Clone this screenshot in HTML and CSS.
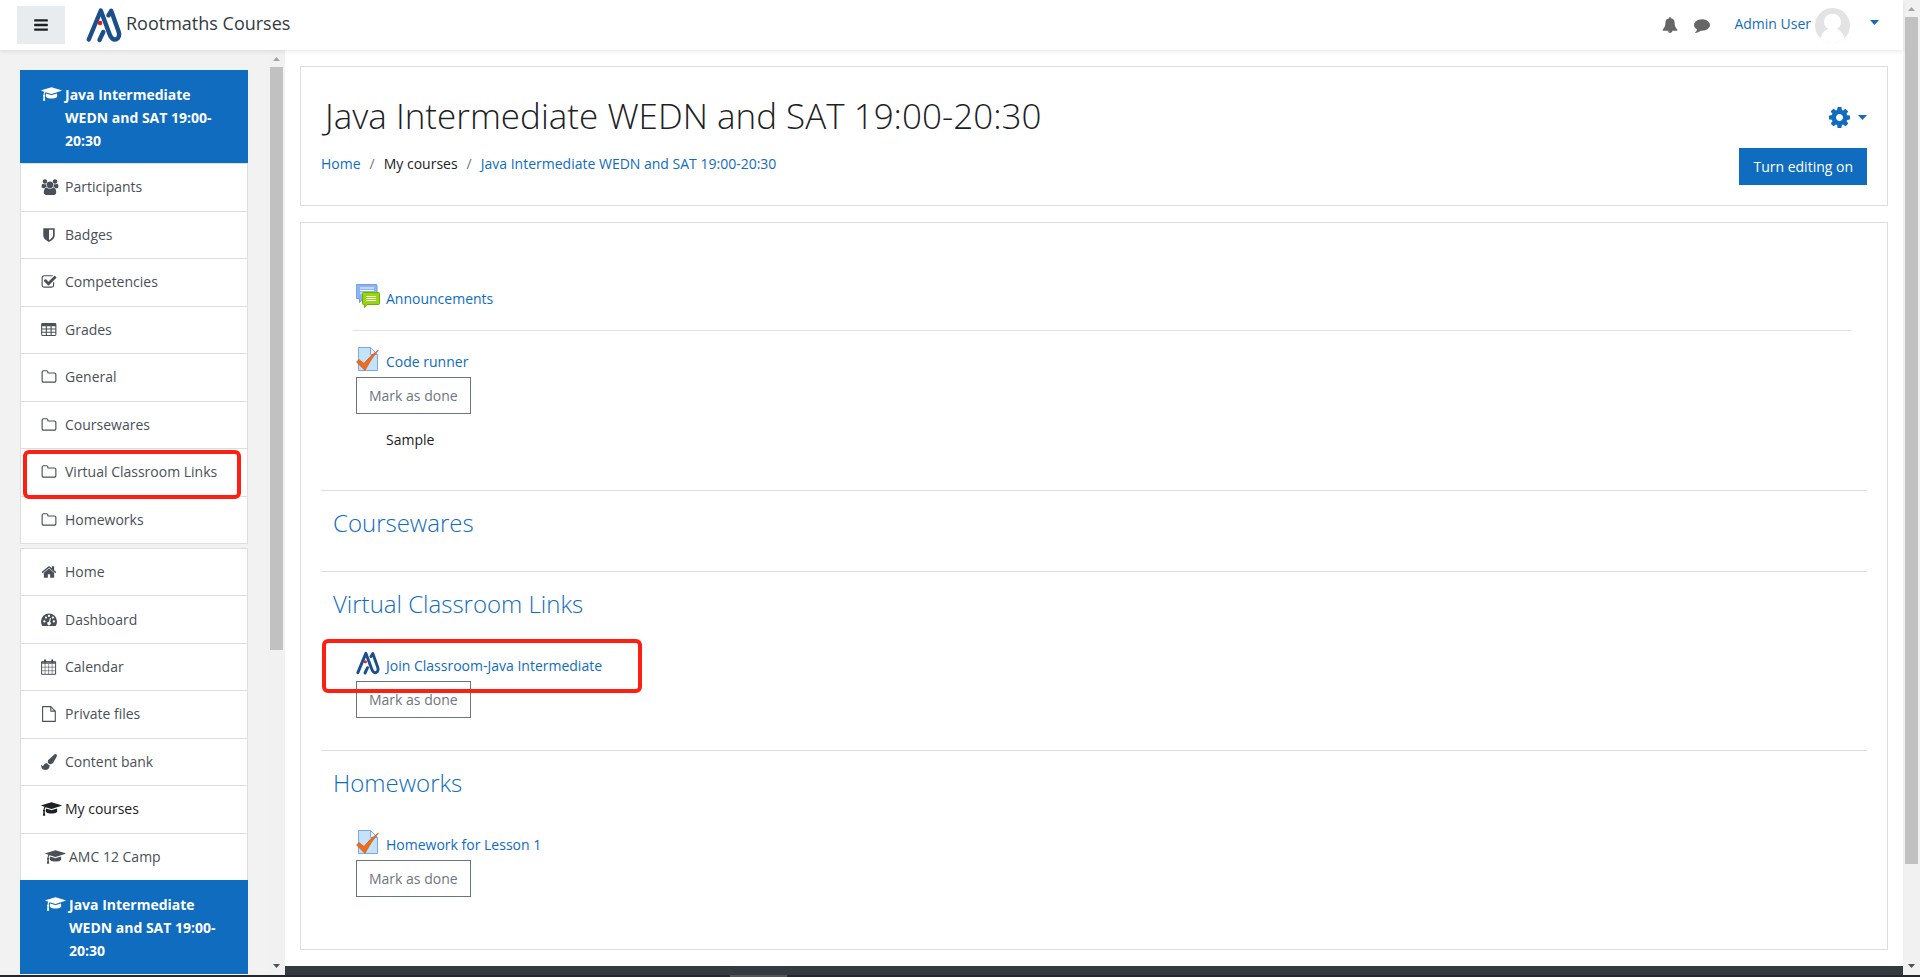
FILE: index.html
```html
<!DOCTYPE html>
<html lang="en">
<head>
    <meta charset="UTF-8">
    <meta name="viewport" content="width=device-width, initial-scale=1.0">
    <title>Course: Java Intermediate WEDN and SAT 19:00-20:30</title>
    <link rel="stylesheet" href="styles.css">
</head>
<body>
    <svg class="sprite" xmlns="http://www.w3.org/2000/svg">
        <symbol id="i-bars" viewBox="0 0 1792 1792"><path d="M1664 1344v128q0 26-19 45t-45 19h-1408q-26 0-45-19t-19-45v-128q0-26 19-45t45-19h1408q26 0 45 19t19 45zm0-512v128q0 26-19 45t-45 19h-1408q-26 0-45-19t-19-45v-128q0-26 19-45t45-19h1408q26 0 45 19t19 45zm0-512v128q0 26-19 45t-45 19h-1408q-26 0-45-19t-19-45v-128q0-26 19-45t45-19h1408q26 0 45 19t19 45z"/></symbol>
        <symbol id="i-cap" viewBox="0 0 2304 1792"><path d="M1774 836l18 316q4 69-82 128t-235 93.500-323 34.500-323-34.500-235-93.500-82-128l18-316 574 181q22 7 48 7t48-7zm530-324q0 23-22 31l-1120 352q-4 1-10 1t-10-1l-652-206q-43 34-71 111.500t-34 178.500q63 36 63 109 0 69-58 107l58 433q2 14-8 25-9 11-24 11h-192q-15 0-24-11-10-11-8-25l58-433q-58-38-58-107 0-73 65-111 11-207 98-330l-333-104q-22-8-22-31t22-31l1120-352q4-1 10-1t10 1l1120 352q22 8 22 31z"/></symbol>
        <symbol id="i-users" viewBox="0 0 2048 1792"><path d="M657 896q-162 5-265 128h-134q-82 0-138-40.500t-56-118.500q0-353 124-353 6 0 43.500 21t97.500 42.500 119 21.500q67 0 133-23-5 37-5 66 0 139 81 256zm1071 637q0 120-73 189.500t-194 69.500h-874q-121 0-194-69.500t-73-189.500q0-53 3.500-103.500t14-109 26.500-108.500 43-97.500 62-81 85.500-53.500 111.500-20q10 0 43 21.500t73 48 107 48 135 21.500 135-21.500 107-48 73-48 43-21.500q61 0 111.500 20t85.500 53.500 62 81 43 97.500 26.500 108.500 14 109 3.500 103.500zm-1024-1277q0 106-75 181t-181 75-181-75-75-181 75-181 181-75 181 75 75 181zm704 384q0 159-112.500 271.500t-271.500 112.500-271.500-112.500-112.500-271.500 112.500-271.500 271.500-112.500 271.500 112.500 112.500 271.500zm576 225q0 78-56 118.500t-138 40.500h-134q-103-123-265-128 81-117 81-256 0-29-5-66 66 23 133 23 59 0 119-21.500t97.500-42.500 43.500-21q124 0 124 353zm-128-609q0 106-75 181t-181 75-181-75-75-181 75-181 181-75 181 75 75 181z"/></symbol>
        <symbol id="i-shield" viewBox="0 0 1792 1792"><path d="M1344 960v-640h-448v1137q119-63 213-137 235-184 235-360zm192-768v768q0 86-33.500 170.500t-83 150-118 127.500-126.500 103-121 77.500-89.500 49.500-42.500 20q-12 6-26 6t-26-6q-16-7-42.500-20t-89.500-49.500-121-77.500-126.500-103-118-127.500-83-150-33.500-170.500v-768q0-26 19-45t45-19h1152q26 0 45 19t19 45z"/></symbol>
        <symbol id="i-check" viewBox="0 0 1792 1792"><path d="M1472 930v318q0 119-84.500 203.500t-203.500 84.500h-832q-119 0-203.500-84.500t-84.500-203.500v-832q0-119 84.500-203.500t203.500-84.500h832q63 0 117 25 15 7 18 23 3 17-9 29l-49 49q-10 10-23 10-3 0-9-2-23-6-45-6h-832q-66 0-113 47t-47 113v832q0 66 47 113t113 47h832q66 0 113-47t47-113v-254q0-13 9-22l64-64q10-10 23-10 6 0 12 3 20 8 20 29zm231-489l-814 814q-24 24-57 24t-57-24l-430-430q-24-24-24-57t24-57l110-110q24-24 57-24t57 24l263 263 647-647q24-24 57-24t57 24l110 110q24 24 24 57t-24 57z"/></symbol>
        <symbol id="i-table" viewBox="0 0 16 16"><path fill-rule="evenodd" d="M1.500 1h12.500a1.400 1.400 0 0 1 1.400 1.400v10.200a1.400 1.400 0 0 1-1.400 1.400h-12.500a1.400 1.400 0 0 1-1.400-1.400v-10.200a1.400 1.400 0 0 1 1.400-1.400zM1.200 4.200v2.300h3.600v-2.300zM5.900 4.200v2.300h3.700v-2.300zM10.700 4.200v2.300h3.600v-2.300zM1.200 7.500v2.300h3.600v-2.300zM5.900 7.500v2.300h3.700v-2.300zM10.700 7.500v2.300h3.600v-2.300zM1.200 10.800v2.100h3.600v-2.100zM5.900 10.800v2.100h3.700v-2.100zM10.700 10.800v2.100h3.600v-2.100z"/></symbol>
        <symbol id="i-folder" viewBox="0 0 1792 1792"><path d="M1600 1312v-704q0-40-28-68t-68-28h-704q-40 0-68-28t-28-68v-64q0-40-28-68t-68-28h-320q-40 0-68 28t-28 68v960q0 40 28 68t68 28h1216q40 0 68-28t28-68zm128-704v704q0 92-66 158t-158 66h-1216q-92 0-158-66t-66-158v-960q0-92 66-158t158-66h320q92 0 158 66t66 158v32h672q92 0 158 66t66 158z"/></symbol>
        <symbol id="i-home" viewBox="0 0 1792 1792"><path d="M1472 992v480q0 26-19 45t-45 19h-384v-384h-256v384h-384q-26 0-45-19t-19-45v-480q0-1 .5-3t.5-3l575-474 575 474q1 2 1 6zm223-69l-62 74q-8 9-21 11h-3q-13 0-21-7l-692-577-692 577q-12 8-24 7-13-2-21-11l-62-74q-8-10-7-23.500t11-21.500l719-599q32-26 76-26t76 26l244 204v-195q0-14 9-23t23-9h192q14 0 23 9t9 23v408l219 182q10 8 11 21.500t-7 23.500z"/></symbol>
        <symbol id="i-dash" viewBox="0 0 16 16"><path fill-rule="evenodd" d="M8 1.500a8 8 0 0 1 8 8 8 8 0 0 1-1.200 4.200q-.2.300-.5.300h-12.600q-.3 0-.5-.3a8 8 0 0 1-1.200-4.200 8 8 0 0 1 8-8zM3.400 8.300a1.100 1.100 0 1 0 0 2.300 1.100 1.100 0 1 0 0-2.300zM5 4.400a1.100 1.100 0 1 0 0 2.300 1.100 1.100 0 1 0 0-2.300zM8 2.800a1.100 1.100 0 1 0 0 2.300 1.100 1.100 0 1 0 0-2.300zM11.900 4.400a1.100 1.100 0 1 0 0 2.300 1.100 1.100 0 1 0 0-2.300zM12.900 8.300a1.100 1.100 0 1 0 0 2.300 1.100 1.100 0 1 0 0-2.300zM9 6l-1 3.800a1.700 1.700 0 1 0 1 .3l1-3.800z"/></symbol>
        <symbol id="i-calendar" viewBox="0 0 16 16"><g fill="none" stroke="currentColor"><path d="M.6 2.600h14v12.700h-14z"/><path stroke-width="1.500" d="M.6 4h14"/><path stroke-width=".6" d="M4.100 5v10M7.600 5v10M11.100 5v10M.6 8.200h14M.6 11.700h14"/><path stroke-width="2" stroke-linecap="round" d="M4 1.200v2M11.200 1.200v2"/></g></symbol>
        <symbol id="i-file" viewBox="0 0 16 16"><path fill="none" stroke="currentColor" stroke-width="1.100" stroke-linejoin="round" d="M1.600.6h8.200l4.500 4.500v10.300h-12.700zM9.800.6v4.500h4.500"/></symbol>
        <symbol id="i-brush" viewBox="0 0 1792 1792"><path d="M1615 0q70 0 122.500 46.500t52.500 116.500q0 63-45 151-332 629-465 752-97 91-218 91-126 0-216.500-92.500t-90.500-219.500q0-128 92-212l638-579q59-54 130-54zm-909 1034q39 76 106.500 130t150.500 76l1 71q4 213-129.500 347t-348.500 134q-123 0-218-46.500t-152.500-127.500-86.500-183-29-220q7 5 41 30t62 44.500 59 36.500 46 17q41 0 55-37 25-66 57.500-112.500t69.500-76 88-47.500 103-25.500 125-10.500z"/></symbol>
        <symbol id="i-bell" viewBox="0 0 1792 1792"><path d="M912 1696q0-16-16-16-59 0-101.500-42.500t-42.500-101.500q0-16-16-16t-16 16q0 73 51.500 124.500t124.500 51.500q16 0 16-16zm816-288q0 52-38 90t-90 38h-448q0 106-75 181t-181 75-181-75-75-181h-448q-52 0-90-38t-38-90q50-42 91-88t85-119.500 74.500-158.500 50-206 19.500-260q0-152 117-282.500t307-158.500q-8-19-8-39 0-40 28-68t68-28 68 28 28 68q0 20-8 39 190 28 307 158.500t117 282.500q0 139 19.500 260t50 206 74.500 158.500 85 119.500 91 88z"/></symbol>
        <symbol id="i-comment" viewBox="0 0 1792 1792"><path d="M1792 896q0 174-120 321.500t-326 233-450 85.500q-70 0-145-8-198 175-460 242-49 14-114 22-17 2-30.500-9t-17.500-29v-1q-3-4-.5-12t2-10 4.500-9.500l6-9 7-8.500 8-9q7-8 31-34.500t34.500-38 31-39.500 32.500-51 27-59 26-76q-157-89-247.500-220t-90.500-281q0-130 71-248.500t191-204.500 286-136.500 348-50.500q244 0 450 85.500t326 233 120 321.500z"/></symbol>
        <symbol id="i-cog" viewBox="128 128 1536 1536"><path d="M1152 896q0-106-75-181t-181-75-181 75-75 181 75 181 181 75 181-75 75-181zm512-109v222q0 12-8 23t-20 13l-185 28q-19 54-39 91 35 50 107 138 10 12 10 25t-9 23q-27 37-99 108t-94 71q-12 0-26-9l-138-108q-44 23-91 38-16 136-29 186-7 28-36 28h-222q-14 0-24.500-8.500t-11.500-21.500l-28-184q-49-16-90-37l-141 107q-10 9-25 9-14 0-25-11-126-114-165-168-7-10-7-23 0-12 8-23 15-21 51-66.500t54-70.500q-27-50-41-99l-183-27q-13-2-21-12.500t-8-23.500v-222q0-12 8-23t19-13l186-28q14-46 39-92-40-57-107-138-10-12-10-24 0-10 9-23 26-36 98.500-107.500t94.500-71.500q13 0 26 10l138 107q44-23 91-38 16-136 29-186 7-28 36-28h222q14 0 24.500 8.500t11.500 21.500l28 184q49 16 90 37l142-107q9-9 24-9 13 0 25 10 129 119 165 170 7 8 7 22 0 12-8 23-15 21-51 66.500t-54 70.500q26 50 41 98l183 28q13 2 21 12.500t8 23.500z"/></symbol>
        <symbol id="i-logo" viewBox="0 0 36 36">
            <g fill="none" stroke="#1b4f8c" stroke-width="4.400" stroke-linecap="round" stroke-linejoin="round">
                <path d="M2.800 32.500L14.800 3.500l8.700 23.500C25.500 32.500 29 34 31.800 31.200q2.200-2.500.7-7L25.200 3.800l-2.700 4.500"/>
                <path d="M17.300 25l-3.800 8"/>
            </g>
            <circle cx="14" cy="16" r="2.300" fill="#f01515"/>
        </symbol>
        <symbol id="i-forum" viewBox="0 0 24 24">
            <path d="M1 .5h19a1 1 0 0 1 1 1v12a1 1 0 0 1-1 1h-13l-3.500 4v-4h-2.500a1 1 0 0 1-1-1v-12a1 1 0 0 1 1-1z" fill="#8db4f2" stroke="#6f9be8"/>
            <path d="M4 4h14M4 6.500h14M4 9h4" stroke="#fff"/>
            <path d="M7.500 8.500h15a1 1 0 0 1 1 1v10a1 1 0 0 1-1 1h-11.500l-2.500 3v-3h-1a1 1 0 0 1-1-1v-10a1 1 0 0 1 1-1z" fill="#96d60c" stroke="#6fae0a"/>
            <path d="M10 12.500h10M10 14.500h10M10 16.500h10" stroke="#fff"/>
        </symbol>
        <symbol id="i-quiz" viewBox="0 0 24 24">
            <path d="M2.500.5h12l7 7v16h-19z" fill="#c3e3fa" stroke="#7ba7ec"/>
            <path d="M14.500.5v7h7z" fill="#e8f4fe" stroke="#7ba7ec"/>
            <path d="M.5 15l2.500-2.500 5 4q6-8 14.500-13.500-7 8-13.500 20.500z" fill="#ee6c1b" stroke="#c9510d" stroke-width=".6"/>
        </symbol>
        <symbol id="i-up" viewBox="0 0 7 4"><path d="M3.500 0L7 4H0z"/></symbol>
        <symbol id="i-down" viewBox="0 0 7 4"><path d="M3.500 4L7 0H0z"/></symbol>
        <symbol id="i-caret" viewBox="0 0 9 5"><path d="M0 0h9l-4.500 5z"/></symbol>
    </svg>

    <div class="window">
        <div class="page">
            <header class="navbar">
                <button class="drawer-toggle" type="button" aria-label="Side panel"><svg class="icon"><use href="#i-bars"/></svg></button>
                <a class="brand" href="#"><svg class="brand-logo"><use href="#i-logo"/></svg>Rootmaths Courses</a>
                <div class="navbar-right">
                    <button class="nav-icon" type="button" aria-label="Notifications"><svg class="icon"><use href="#i-bell"/></svg></button>
                    <button class="nav-icon" type="button" aria-label="Messages"><svg class="icon"><use href="#i-comment"/></svg></button>
                    <a class="user-menu" href="#"><span>Admin User</span>
                        <svg class="avatar" viewBox="0 0 35 35"><defs><clipPath id="round"><circle cx="17.500" cy="17.500" r="17.500"/></clipPath></defs><g clip-path="url(#round)"><path fill="#e3e3e3" d="M0 0h35v35H0z"/><path fill="#fff" d="M17.500 6a7.500 8 0 0 1 4.500 15q7 2 8 14h-25q1-12 8-14a7.500 8 0 0 1 4.500-15z"/></g></svg>
                        <svg class="caret"><use href="#i-caret"/></svg>
                    </a>
                </div>
            </header>

            <div class="body">
                <aside class="drawer">
                    <div class="drawer-content">
                        <ul class="list-group course-nav">
                            <li class="active"><a href="#"><svg class="icon wide"><use href="#i-cap"/></svg><span>Java Intermediate WEDN and SAT 19:00-20:30</span></a></li>
                            <li><a href="#"><svg class="icon users"><use href="#i-users"/></svg><span>Participants</span></a></li>
                            <li><a href="#"><svg class="icon"><use href="#i-shield"/></svg><span>Badges</span></a></li>
                            <li><a href="#"><svg class="icon"><use href="#i-check"/></svg><span>Competencies</span></a></li>
                            <li><a href="#"><svg class="icon"><use href="#i-table"/></svg><span>Grades</span></a></li>
                            <li><a href="#"><svg class="icon"><use href="#i-folder"/></svg><span>General</span></a></li>
                            <li><a href="#"><svg class="icon"><use href="#i-folder"/></svg><span>Coursewares</span></a></li>
                            <li class="marked"><a href="#"><svg class="icon"><use href="#i-folder"/></svg><span>Virtual Classroom Links</span></a></li>
                            <li><a href="#"><svg class="icon"><use href="#i-folder"/></svg><span>Homeworks</span></a></li>
                        </ul>
                        <ul class="list-group site-nav">
                            <li><a href="#"><svg class="icon"><use href="#i-home"/></svg><span>Home</span></a></li>
                            <li><a href="#"><svg class="icon"><use href="#i-dash"/></svg><span>Dashboard</span></a></li>
                            <li><a href="#"><svg class="icon"><use href="#i-calendar"/></svg><span>Calendar</span></a></li>
                            <li><a href="#"><svg class="icon"><use href="#i-file"/></svg><span>Private files</span></a></li>
                            <li><a href="#"><svg class="icon"><use href="#i-brush"/></svg><span>Content bank</span></a></li>
                            <li class="heading"><a href="#"><svg class="icon wide"><use href="#i-cap"/></svg><span>My courses</span></a></li>
                            <li class="nested"><a href="#"><svg class="icon wide"><use href="#i-cap"/></svg><span>AMC 12 Camp</span></a></li>
                            <li class="nested active"><a href="#"><svg class="icon wide"><use href="#i-cap"/></svg><span>Java Intermediate WEDN and SAT 19:00-20:30</span></a></li>
                        </ul>
                    </div>
                    <div class="scrollbar">
                        <svg class="arrow"><use href="#i-up"/></svg>
                        <div class="track"><div class="thumb drawer-thumb"></div></div>
                        <svg class="arrow dark"><use href="#i-down"/></svg>
                    </div>
                </aside>

                <main class="main">
                    <section class="card page-header">
                        <div>
                            <h1>Java Intermediate WEDN and SAT 19:00-20:30</h1>
                            <nav class="breadcrumb">
                                <a href="#">Home</a><span class="sep">/</span><span>My courses</span><span class="sep">/</span><a href="#">Java Intermediate WEDN and SAT 19:00-20:30</a>
                            </nav>
                        </div>
                        <div class="header-actions">
                            <button class="settings" type="button" aria-label="Actions menu"><svg class="cog"><use href="#i-cog"/></svg><svg class="caret"><use href="#i-caret"/></svg></button>
                            <button class="btn-primary" type="button">Turn editing on</button>
                        </div>
                    </section>

                    <section class="card course-content">
                        <div class="section general">
                            <div class="activity">
                                <a href="#"><svg class="activity-icon"><use href="#i-forum"/></svg>Announcements</a>
                            </div>
                            <hr>
                            <div class="activity">
                                <a href="#"><svg class="activity-icon"><use href="#i-quiz"/></svg>Code runner</a>
                                <button class="btn-outline" type="button">Mark as done</button>
                                <p>Sample</p>
                            </div>
                        </div>
                        <div class="section">
                            <h3><a href="#">Coursewares</a></h3>
                        </div>
                        <div class="section">
                            <h3><a href="#">Virtual Classroom Links</a></h3>
                            <div class="activity marked">
                                <a href="#"><svg class="activity-icon"><use href="#i-logo"/></svg>Join Classroom-Java Intermediate</a>
                                <button class="btn-outline" type="button">Mark as done</button>
                            </div>
                        </div>
                        <div class="section">
                            <h3><a href="#">Homeworks</a></h3>
                            <div class="activity">
                                <a href="#"><svg class="activity-icon"><use href="#i-quiz"/></svg>Homework for Lesson 1</a>
                                <button class="btn-outline" type="button">Mark as done</button>
                            </div>
                        </div>
                    </section>
                    <footer class="footer"></footer>
                </main>
            </div>
        </div>
        <div class="scrollbar">
            <svg class="arrow"><use href="#i-up"/></svg>
            <div class="track"><div class="thumb page-thumb"></div></div>
            <svg class="arrow dark"><use href="#i-down"/></svg>
        </div>
    </div>
    <div class="taskbar"></div>
</body>
</html>
```

FILE: styles.css
```css
*,
*::after {
    box-sizing: border-box;
}

body {
    margin: 0;
    height: 100vh;
    display: flex;
    flex-direction: column;
    overflow: hidden;
    background: #fff;
    font-family: 'Segoe UI', 'Open Sans', 'Noto Sans', sans-serif;
    font-size: 14px;
    line-height: 22px;
    color: #1d2125;
}

a {
    color: #0f6cbf;
    text-decoration: none;
}

button {
    font: inherit;
    border: none;
    background: none;
    padding: 0;
    cursor: pointer;
}

svg {
    fill: currentColor;
    flex: none;
}

.sprite {
    position: absolute;
    width: 0;
    height: 0;
}

.window {
    flex: 1;
    min-height: 0;
    display: flex;
}

.page {
    flex: 1;
    min-width: 0;
    display: flex;
    flex-direction: column;
}

.taskbar {
    height: 2px;
    background: linear-gradient(90deg, #26272b 38%, #555 38%, #555 41%, #26272b 41%);
}

.icon {
    width: 16px;
    height: 16px;
}

.icon.wide {
    width: 21px;
}

.icon.users {
    width: 18px;
}

.caret {
    width: 9px;
    height: 5px;
}

/* Navbar */
.navbar {
    position: relative;
    z-index: 2;
    height: 50px;
    display: flex;
    align-items: center;
    padding: 0 24px 0 17px;
    background: #fff;
    box-shadow: 0 2px 4px rgba(0, 0, 0, 0.08);
}

.drawer-toggle {
    width: 48px;
    height: 38px;
    display: flex;
    align-items: center;
    justify-content: center;
    background: #e9ecef;
    color: #1d2125;
}

.brand {
    display: flex;
    align-items: center;
    gap: 4px;
    margin-left: 21px;
    padding-bottom: 4px;
    font-size: 18px;
    color: #343a40;
}

.brand-logo {
    width: 36px;
    height: 36px;
    margin-top: 4px;
}

.navbar-right {
    margin-left: auto;
    display: flex;
    align-items: center;
}

.nav-icon {
    width: 16px;
    height: 16px;
    margin-right: 16px;
    color: #666;
}

.nav-icon .icon {
    display: block;
}

.user-menu {
    display: flex;
    align-items: center;
    margin-left: 8px;
}

.user-menu span {
    padding-bottom: 2px;
}

.user-menu .caret {
    margin-bottom: 5px;
}

.avatar {
    width: 35px;
    height: 35px;
    margin: 0 20px 0 4px;
}

/* Drawer */
.body {
    flex: 1;
    min-height: 0;
    display: flex;
}

.drawer {
    width: 285px;
    flex: none;
    display: flex;
    background: #f2f2f2;
}

.drawer-content {
    flex: 1;
    min-width: 0;
    padding: 20px;
    overflow: hidden;
}

.list-group {
    list-style: none;
    margin: 0 0 4px;
    padding: 0;
    display: flex;
    flex-direction: column;
}

.course-nav {
    min-height: 474px;
}

.site-nav {
    min-height: 426px;
}

.list-group li {
    flex: 1 0 auto;
    display: flex;
    align-items: center;
    position: relative;
    padding: 12px 20px;
    background: #fff;
    border: 1px solid #dedede;
    border-bottom-width: 0;
}

.list-group li:last-child {
    border-bottom-width: 1px;
}

.list-group a {
    display: flex;
    color: #495057;
}

.list-group .icon {
    margin: 3px 8px 0 0;
}

.list-group .icon.wide {
    margin-right: 3px;
}

.list-group .icon.users {
    margin-right: 6px;
}

.list-group li.nested {
    padding-left: 24px;
}

.list-group li.heading a {
    color: #1d2125;
}

.list-group li.active {
    flex: none;
    background: #0f6cbf;
    border-color: #0f6cbf;
    padding-right: 16px;
    padding-bottom: 11px;
}

.list-group li.active a {
    color: #fff;
    font-weight: 700;
    line-height: 23px;
}

/* Red annotation frames lie over the content */
.marked::after {
    content: "";
    position: absolute;
    border: 4px solid #ff1f10;
    border-radius: 6px;
    z-index: 1;
    pointer-events: none;
}

.list-group li.marked::after {
    inset: 1px 6px -3px 2px;
}

.activity.marked::after {
    left: -34px;
    top: -12px;
    width: 320px;
    height: 54px;
}

/* Scrollbars */
.scrollbar {
    width: 17px;
    flex: none;
    display: flex;
    flex-direction: column;
    align-items: center;
    background: #f1f1f1;
}

.arrow {
    width: 7px;
    height: 4px;
    margin: 7px 0 6px;
    color: #a3a3a3;
}

.arrow.dark {
    margin: 6px 0 7px;
    color: #505050;
}

.track {
    flex: 1;
    width: 13px;
}

.thumb {
    background: #c1c1c1;
}

.drawer-thumb {
    height: 65.4%;
}

.page-thumb {
    height: 90%;
}

/* Main region */
.main {
    flex: 1;
    min-width: 0;
    display: flex;
    flex-direction: column;
    gap: 16px;
    padding-top: 16px;
}

.card {
    margin: 0 15px;
    padding: 20px;
    border: 1px solid #dedede;
    background: #fff;
}

.page-header {
    display: flex;
    justify-content: space-between;
}

h1 {
    margin: 5px 0 13px 4px;
    font-size: 35px;
    line-height: 48px;
    font-weight: 300;
}

.breadcrumb {
    display: flex;
}

.sep {
    padding: 0 9px;
    color: #6c757d;
}

.header-actions {
    display: flex;
    flex-direction: column;
    align-items: flex-end;
    gap: 20px;
    padding-top: 20px;
}

.settings {
    display: flex;
    align-items: center;
    gap: 8px;
    color: #0f6cbf;
}

.cog {
    width: 21px;
    height: 21px;
}

.btn-primary {
    height: 37px;
    padding: 0 14px;
    background: #0f6cbf;
    color: #fff;
}

.course-content {
    padding-top: 61px;
}

.section {
    padding: 14px 16px 30px 12px;
    border-bottom: 1px solid #dedede;
}

.section:last-child {
    border-bottom: none;
}

.section.general {
    padding-top: 0;
}

h3 {
    margin: 0;
    font-size: 24px;
    line-height: 36px;
    font-weight: 300;
}

h3 + .activity {
    margin-top: 29px;
    margin-bottom: 2px;
}

.activity {
    position: relative;
    margin-left: 23px;
}

.activity a {
    display: flex;
    gap: 6px;
    line-height: 30px;
}

.activity-icon {
    width: 24px;
    height: 24px;
}

.activity p {
    margin: 15px 0 9px 30px;
}

hr {
    margin: 16px 0 16px 20px;
    border: none;
    border-top: 1px solid #dee2e6;
}

.btn-outline {
    display: block;
    height: 37px;
    padding: 0 12px;
    border: 1px solid #6c757d;
    color: #6c757d;
}

.footer {
    flex: 1;
    background: #343a40;
}
```
